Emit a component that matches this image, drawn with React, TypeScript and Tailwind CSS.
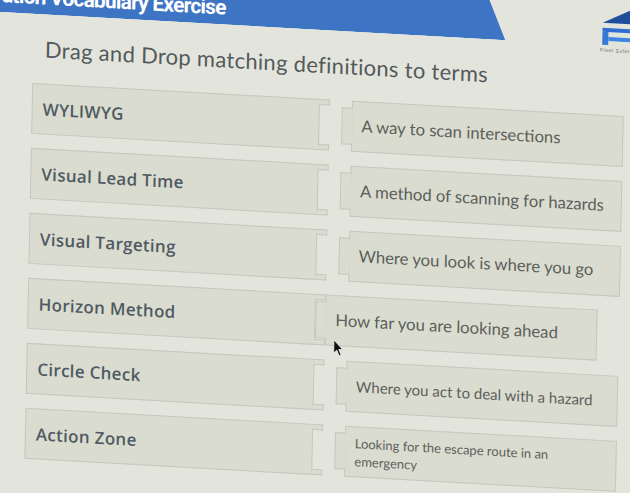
import React from "react";

type Row = { t: string; d: string; dropped?: boolean; size: "lg" | "md" | "sm" };

const rows: Row[] = [
  { t: "WYLIWYG", d: "A way to scan intersections", size: "lg" },
  { t: "Visual Lead Time", d: "A method of scanning for hazards", size: "lg" },
  { t: "Visual Targeting", d: "Where you look is where you go", size: "lg" },
  { t: "Horizon Method", d: "How far you are looking ahead", dropped: true, size: "lg" },
  { t: "Circle Check", d: "Where you act to deal with a hazard", size: "md" },
  { t: "Action Zone", d: "Looking for the escape route in an emergency", size: "sm" },
];

function Logo() {
  return (
    <div className="flex flex-col items-start">
      <svg width="44" height="38" viewBox="0 0 44 38">
        <polygon points="2,15 30,1 44,1 44,15" fill="#1f4f9c" />
        <rect x="2" y="20" width="42" height="4" fill="#2f6fd0" />
        <rect x="2" y="24" width="6" height="13" fill="#3479d6" />
        <rect x="8" y="29" width="36" height="4" fill="#3f86e0" />
      </svg>
      <div className="mt-[1px] whitespace-nowrap text-[5px] leading-[6px] tracking-[0.5px] text-[#6a6f73] [font-family:'Liberation_Sans',sans-serif]">
        Fleet Safety
      </div>
    </div>
  );
}

function DefText({ r }: { r: Row }) {
  if (r.size === "sm") {
    return <span className="max-w-[215px] text-[13px] leading-[18px]">{r.d}</span>;
  }
  if (r.size === "md") {
    return <span className="whitespace-nowrap text-[15px]">{r.d}</span>;
  }
  return <span className="whitespace-nowrap text-[16.7px]">{r.d}</span>;
}

function TermRow({ r }: { r: Row }) {
  return (
    <div className="flex h-[51px] items-stretch">
      <div className="flex">
        <div className="flex w-[288px] items-center border border-[#c5c8bc] bg-[#dadcd0] pl-[10px] text-[17px] font-semibold tracking-[0.3px] text-[#4f5a62] [font-family:'Open_Sans',sans-serif]">
          {r.t}
        </div>
        <div className="flex w-[10px] flex-col justify-between">
          <div className="-ml-px h-[6px] w-[11px] border-y border-r border-[#c5c8bc] bg-[#dadcd0]" />
          <div className="-ml-px h-[6px] w-[11px] border-y border-r border-[#c5c8bc] bg-[#dadcd0]" />
        </div>
      </div>
      <div className={r.dropped ? "-ml-[10px] flex" : "ml-[12px] flex"}>
        <div className="relative z-[1] -mr-px my-[7px] w-[11px] border-y border-l border-[#c5c8bc] bg-[#dadcd0]" />
        <div className="flex w-[272px] items-center border border-[#c5c8bc] bg-[#dadcd0] pl-[9px] text-[#5c5f5b] [font-family:Lato,sans-serif]">
          <DefText r={r} />
        </div>
      </div>
    </div>
  );
}

export default function App() {
  return (
    <div className="relative h-[493px] w-[630px] overflow-hidden bg-[#e3e5dd]">
      <div className="relative -mt-[40px] w-[680px] origin-[0_40px] rotate-[1.2deg] skew-y-[2deg]">
        <div className="flex h-[60px] items-start">
          <div className="h-[52px] w-[506px] overflow-hidden bg-[#3d74c4] [clip-path:polygon(0_0,484px_0,506px_52px,0_52px)]">
            <div className="-ml-[60px] pt-[22px] whitespace-nowrap text-[21px] font-bold leading-[26px] tracking-[-0.8px] text-white [font-family:Roboto,sans-serif]">
              Observation Vocabulary Exercise
            </div>
          </div>
          <div className="ml-[95px] mt-[14px]">
            <Logo />
          </div>
        </div>
        <h1 className="mt-[14px] pl-[46px] text-[22px] font-normal leading-[26px] tracking-[0.3px] text-[#54595b] [font-family:Lato,sans-serif]">
          Drag and Drop matching definitions to terms
        </h1>
        <div className="mt-[21px] flex flex-col gap-[14px] pl-[34px]">
          {rows.map((r) => (
            <TermRow key={r.t} r={r} />
          ))}
        </div>
        <svg
          className="absolute left-[340px] top-[360px]"
          width="12"
          height="18"
          viewBox="0 0 12 18"
        >
          <path d="M1 1 L1 14 L4 11 L6.5 16.5 L8.5 15.6 L6 10.2 L10 10.2 Z" fill="#111" stroke="#eee" strokeWidth="0.8" />
        </svg>
      </div>
    </div>
  );
}
